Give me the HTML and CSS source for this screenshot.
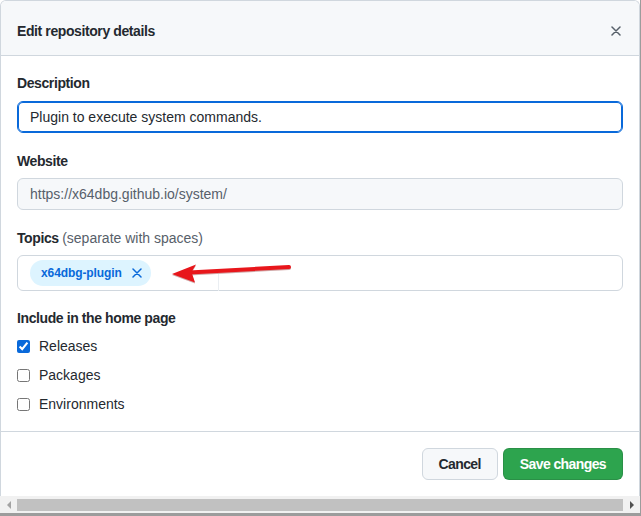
FILE: index.html
```html
<!DOCTYPE html>
<html lang="en">
<head>
<meta charset="utf-8">
<title>Edit repository details</title>
<link rel="stylesheet" href="styles.css">
</head>
<body>
<div class="frame">
  <div class="dialog">
    <header class="dialog-header">
      <h1 class="dialog-title">Edit repository details</h1>
      <button class="close-btn" aria-label="Close">
        <svg width="10" height="10" viewBox="0 0 10 10"><path d="M1 1L9 9M9 1L1 9" stroke="#57606a" stroke-width="1.5" stroke-linecap="round"/></svg>
      </button>
    </header>
    <div class="dialog-body">
      <div class="group">
        <label class="field-label">Description</label>
        <input class="text-input focused" type="text" value="Plugin to execute system commands.">
      </div>
      <div class="group">
        <label class="field-label shifted">Website</label>
        <input class="text-input muted" type="text" value="https://x64dbg.github.io/system/">
      </div>
      <div class="group">
        <label class="field-label shifted">Topics <span class="hint">(separate with spaces)</span></label>
        <div class="topics-field">
          <span class="topic-chip">x64dbg-plugin
            <svg class="chip-x" width="10" height="10" viewBox="0 0 10 10"><path d="M1 1L9 9M9 1L1 9" stroke="#0969da" stroke-width="1.5" stroke-linecap="round"/></svg>
          </span>
          <span class="topic-caret"></span>
          <svg class="annot-arrow" width="130" height="28" viewBox="167 260 130 28">
            <path d="M189 272.5L289 267" stroke="#e8161b" stroke-width="4" stroke-linecap="round" fill="none"/>
            <polygon points="172,274 196,264.5 191.5,272 195,282.5" fill="#e8161b"/>
          </svg>
        </div>
      </div>
      <div class="group last">
        <label class="field-label">Include in the home page</label>
        <div class="checks">
          <label class="check-row"><input type="checkbox" checked> Releases</label>
          <label class="check-row"><input type="checkbox"> Packages</label>
          <label class="check-row"><input type="checkbox"> Environments</label>
        </div>
      </div>
    </div>
    <footer class="dialog-footer">
      <button class="btn btn-default">Cancel</button>
      <button class="btn btn-primary">Save changes</button>
    </footer>
  </div>
  <div class="hscroll">
    <span class="sb-btn"><span class="tri-left"></span></span>
    <span class="sb-track"><span class="sb-thumb"></span></span>
    <span class="sb-btn"><span class="tri-right"></span></span>
  </div>
</div>
</body>
</html>
```
FILE: styles.css
```css
html, body {
  margin: 0;
  padding: 0;
}
body {
  background: #9c9c9c;
  width: 641px;
  height: 516px;
  overflow: hidden;
  font-family: "Liberation Sans", Arial, sans-serif;
  font-size: 14px;
  color: #24292f;
}
.frame {
  width: 640px;
  height: 513px;
  display: flex;
  flex-direction: column;
  background: #ffffff;
}
.dialog {
  height: 496px;
  box-sizing: border-box;
  border: 1px solid #d0d7de;
  border-bottom: none;
  border-radius: 6px 6px 0 0;
  display: flex;
  flex-direction: column;
  background: #fff;
  overflow: hidden;
}
.dialog-header {
  display: flex;
  align-items: center;
  padding: 19px 15px 13px 16px;
  height: 22px;
  background: #f6f8fa;
  border-bottom: 1px solid #d0d7de;
}
.dialog-title {
  margin: 0;
  font-size: 14px;
  font-weight: 700;
  letter-spacing: -0.4px;
  line-height: 22px;
  flex: 1;
}
.close-btn {
  width: 16px;
  height: 16px;
  padding: 0;
  border: 0;
  background: none;
  display: flex;
  align-items: center;
  justify-content: center;
}
.dialog-body {
  padding: 17px 16px 16px 16px;
  flex: 1;
}
.group {
  margin-bottom: 17px;
}
.group.last {
  margin-bottom: 0;
}
.field-label {
  display: block;
  font-weight: 700;
  letter-spacing: -0.4px;
  line-height: 20px;
  margin-bottom: 8px;
}
.field-label.shifted {
  padding-top: 1px;
  margin-bottom: 7px;
}
.hint {
  font-weight: 400;
  letter-spacing: 0;
  color: #57606a;
}
.text-input {
  display: block;
  box-sizing: border-box;
  width: 100%;
  height: 32px;
  margin: 0;
  padding: 0 12px;
  border: 1px solid #d0d7de;
  border-radius: 6px;
  font-family: "Liberation Sans", Arial, sans-serif;
  font-size: 14px;
  color: #24292f;
  background: #fff;
  outline: none;
}
.text-input.focused {
  border-color: #0969da;
  box-shadow: inset 0 0 0 1px #0969da;
}
.text-input.muted {
  background: #f6f8fa;
  color: #57606a;
}
.topics-field {
  position: relative;
  box-sizing: border-box;
  height: 36px;
  border: 1px solid #d0d7de;
  border-radius: 6px;
  padding: 4px 12px;
  display: flex;
  align-items: flex-start;
}
.topic-chip {
  display: inline-flex;
  align-items: center;
  height: 26px;
  box-sizing: border-box;
  padding: 0 9px 0 11px;
  border-radius: 13px;
  background: #ddf4ff;
  color: #0969da;
  font-size: 12px;
  font-weight: 700;
  letter-spacing: -0.1px;
  white-space: nowrap;
}
.chip-x {
  margin-left: 10px;
}
.topic-caret {
  margin-left: 67px;
  margin-top: 14px;
  height: 17px;
  border-left: 1px solid #eaeef2;
}
.annot-arrow {
  position: absolute;
  left: 149px;
  top: 4px;
  filter: drop-shadow(0 1px 0.6px rgba(120, 0, 0, 0.35));
}
.checks {
  display: flex;
  flex-direction: column;
  gap: 9px;
}
.check-row {
  display: flex;
  align-items: center;
  gap: 9px;
  line-height: 20px;
  height: 20px;
}
.check-row input {
  margin: 0;
  width: 13px;
  height: 13px;
  accent-color: #0969da;
}
.dialog-footer {
  border-top: 1px solid #d0d7de;
  padding: 16px;
  display: flex;
  justify-content: flex-end;
  gap: 5px;
}
.btn {
  height: 32px;
  padding: 0 16px;
  border-radius: 6px;
  font-family: "Liberation Sans", Arial, sans-serif;
  font-size: 14px;
  font-weight: 700;
  letter-spacing: -0.6px;
  line-height: 20px;
}
.btn-default {
  background: #f6f8fa;
  border: 1px solid #d0d7de;
  color: #24292f;
}
.btn-primary {
  background: #2da44e;
  border: 1px solid rgba(27, 31, 36, 0.15);
  color: #ffffff;
}
.hscroll {
  height: 17px;
  background: #f1f1f1;
  display: flex;
  align-items: center;
}
.sb-btn {
  width: 17px;
  height: 17px;
  display: flex;
  align-items: center;
  justify-content: center;
}
.sb-track {
  flex: 1;
  height: 17px;
  display: flex;
  align-items: center;
}
.sb-thumb {
  display: block;
  width: 100%;
  height: 12px;
  margin-top: 1px;
  background: #c1c1c1;
}
.tri-left {
  width: 0;
  height: 0;
  border-top: 4px solid transparent;
  border-bottom: 4px solid transparent;
  border-right: 4px solid #a3a3a3;
}
.tri-right {
  width: 0;
  height: 0;
  border-top: 4px solid transparent;
  border-bottom: 4px solid transparent;
  border-left: 4px solid #505050;
}
```
